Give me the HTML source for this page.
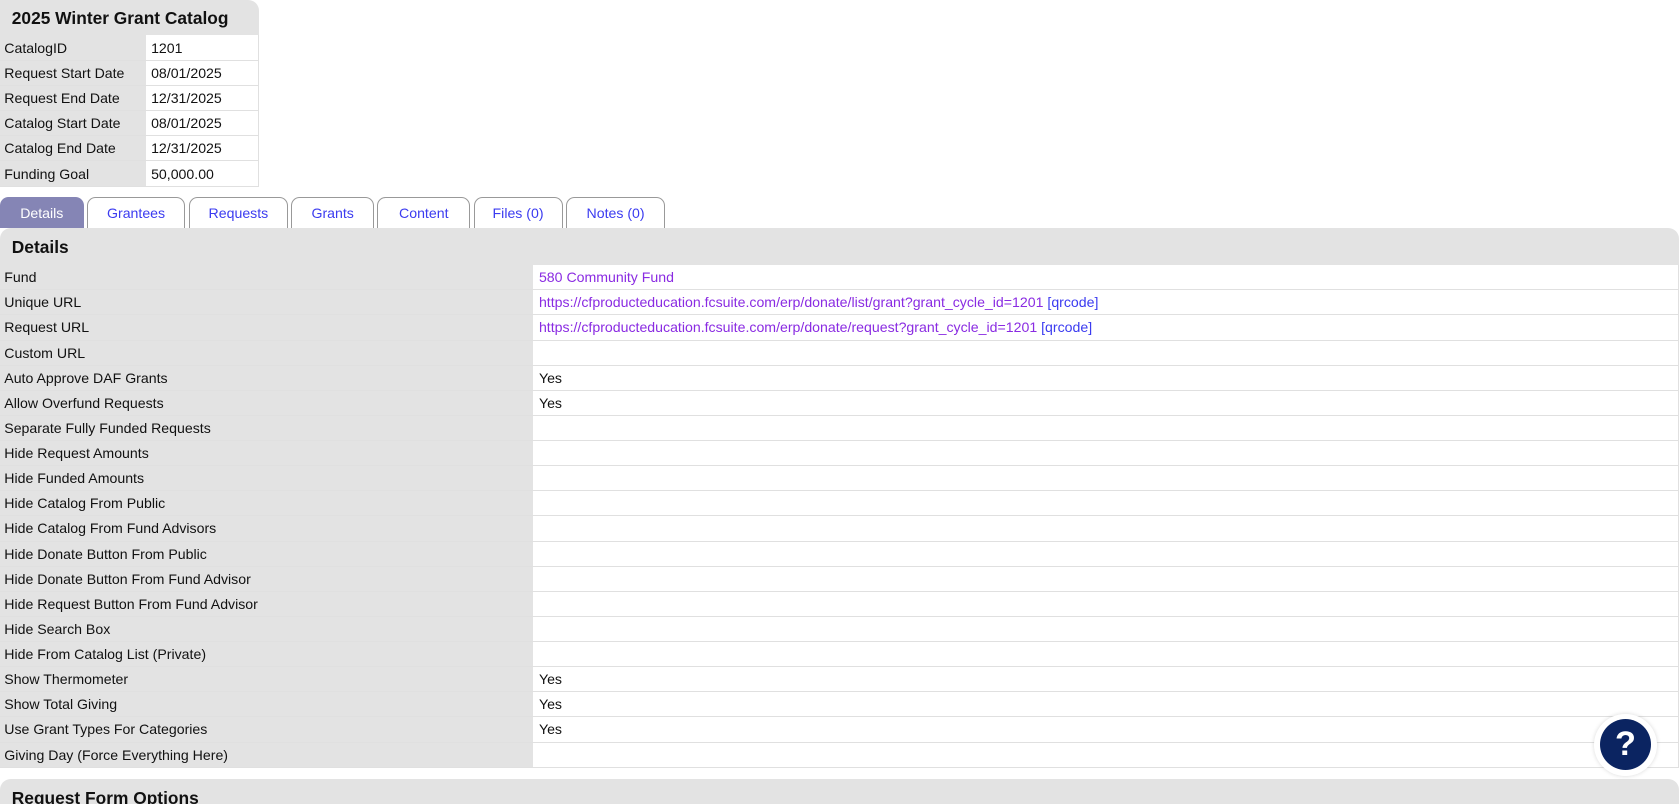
<!DOCTYPE html>
<html><head><style>
*{box-sizing:border-box}
html,body{margin:0;background:#fff;width:1679px;height:804px;overflow:hidden}
#w{zoom:1.0715;position:relative;width:1567px;height:750px;overflow:hidden;font-family:"Liberation Sans","DejaVu Sans",sans-serif;font-size:13.2px;color:#111}
.hdr{background:#e3e3e3;font-weight:bold;font-size:16.2px;padding:0 11px;height:33px;line-height:34px}
table{border-collapse:collapse}
td{height:23.45px;padding:0 4px;border-bottom:1px solid #e0e0e0;white-space:nowrap}
td.l{background:#e3e3e3}
td.v{background:#fff;padding-left:5px}
.top{position:absolute;left:0;top:0;width:242px}
.top .hdr{border-top-right-radius:10px}
.top table{width:242px}
.top td.l{width:136px}
.top td.v{border-right:1px solid #e0e0e0}
.tabs{position:absolute;top:184px;left:0;height:29px}
.tab{position:absolute;top:0;height:29px;border:1px solid #999;border-bottom:none;border-radius:8px 8px 0 0;text-align:center;line-height:29px;color:#3b3bf0;background:#fff}
.tab.a{background:#8585b5;color:#fff;border-color:#8585b5}
.panel{position:absolute;left:0;top:213px;width:1567px}
.panel .hdr{border-radius:10px 10px 0 0;height:34px;line-height:36px}
.panel table{width:1567px}
.panel td.l{width:497px}
.panel td.v{border-right:1px solid #e0e0e0;padding-left:6px}
a{color:#8a2be2;text-decoration:none}
a.q{color:#3b3bf0}
.p2{position:absolute;left:0;top:727px;width:1567px;height:23px;background:#e3e3e3;border-radius:10px 10px 0 0;font-weight:bold;font-size:16.2px;padding:9px 11px;line-height:18px}
.help{position:absolute;left:1488px;top:666px;width:58px;height:58px;border-radius:50%;background:#fff;box-shadow:0 0 4px rgba(0,0,0,.15)}
.help div{position:absolute;left:5px;top:5px;width:48px;height:48px;border-radius:50%;background:#0b2461;color:#fff;font-weight:bold;font-size:32px;text-align:center;line-height:48px}
</style></head><body><div id="w">
<div class="top">
<div class="hdr">2025 Winter Grant Catalog</div>
<table>
<tr><td class="l">CatalogID</td><td class="v">1201</td></tr>
<tr><td class="l">Request Start Date</td><td class="v">08/01/2025</td></tr>
<tr><td class="l">Request End Date</td><td class="v">12/31/2025</td></tr>
<tr><td class="l">Catalog Start Date</td><td class="v">08/01/2025</td></tr>
<tr><td class="l">Catalog End Date</td><td class="v">12/31/2025</td></tr>
<tr><td class="l">Funding Goal</td><td class="v">50,000.00</td></tr>
</table></div>
<div class="tabs">
<div class="tab a" style="left:0;width:78px">Details</div>
<div class="tab" style="left:81px;width:92px">Grantees</div>
<div class="tab" style="left:176px;width:93px">Requests</div>
<div class="tab" style="left:272px;width:77px">Grants</div>
<div class="tab" style="left:352px;width:87px">Content</div>
<div class="tab" style="left:442px;width:83px">Files (0)</div>
<div class="tab" style="left:528px;width:93px">Notes (0)</div>
</div>
<div class="panel">
<div class="hdr">Details</div>
<table>
<tr><td class="l">Fund</td><td class="v"><a>580 Community Fund</a></td></tr>
<tr><td class="l">Unique URL</td><td class="v"><a>https://cfproducteducation.fcsuite.com/erp/donate/list/grant?grant_cycle_id=1201</a> <a class="q">[qrcode]</a></td></tr>
<tr><td class="l">Request URL</td><td class="v"><a>https://cfproducteducation.fcsuite.com/erp/donate/request?grant_cycle_id=1201</a> <a class="q">[qrcode]</a></td></tr>
<tr><td class="l">Custom URL</td><td class="v"></td></tr>
<tr><td class="l">Auto Approve DAF Grants</td><td class="v">Yes</td></tr>
<tr><td class="l">Allow Overfund Requests</td><td class="v">Yes</td></tr>
<tr><td class="l">Separate Fully Funded Requests</td><td class="v"></td></tr>
<tr><td class="l">Hide Request Amounts</td><td class="v"></td></tr>
<tr><td class="l">Hide Funded Amounts</td><td class="v"></td></tr>
<tr><td class="l">Hide Catalog From Public</td><td class="v"></td></tr>
<tr><td class="l">Hide Catalog From Fund Advisors</td><td class="v"></td></tr>
<tr><td class="l">Hide Donate Button From Public</td><td class="v"></td></tr>
<tr><td class="l">Hide Donate Button From Fund Advisor</td><td class="v"></td></tr>
<tr><td class="l">Hide Request Button From Fund Advisor</td><td class="v"></td></tr>
<tr><td class="l">Hide Search Box</td><td class="v"></td></tr>
<tr><td class="l">Hide From Catalog List (Private)</td><td class="v"></td></tr>
<tr><td class="l">Show Thermometer</td><td class="v">Yes</td></tr>
<tr><td class="l">Show Total Giving</td><td class="v">Yes</td></tr>
<tr><td class="l">Use Grant Types For Categories</td><td class="v">Yes</td></tr>
<tr><td class="l">Giving Day (Force Everything Here)</td><td class="v"></td></tr>
</table></div>
<div class="p2">Request Form Options</div>
<div class="help"><div>?</div></div>
</div></body></html>
